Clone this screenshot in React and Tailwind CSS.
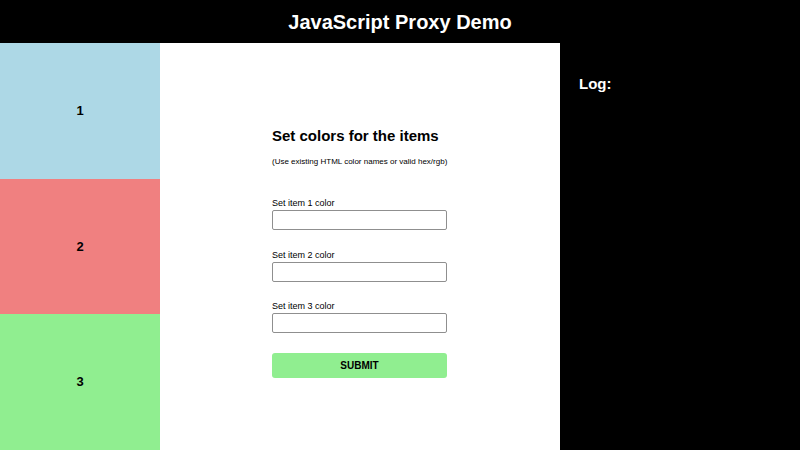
import React from "react";

const items = [
  { id: 1, color: "bg-[#add8e6]" },
  { id: 2, color: "bg-[#f08080]" },
  { id: 3, color: "bg-[#90ee90]" },
];

function ColorField({ n }) {
  return (
    <div className="flex flex-col">
      <label className="text-[9px] leading-[12px] text-black">Set item {n} color</label>
      <input
        type="text"
        className="mt-px h-[20px] w-full rounded-[2px] border border-[#8f8f8f] bg-white px-1 text-[10px]"
      />
    </div>
  );
}

export default function App() {
  return (
    <div
      className="flex h-[450px] w-[800px] flex-col overflow-hidden bg-white"
      style={{ fontFamily: '"Liberation Sans", Arial, sans-serif' }}
    >
      {/* Header */}
      <header className="flex h-[43px] shrink-0 items-center justify-center bg-black">
        <h1 className="text-[20px] font-bold leading-none text-white">JavaScript Proxy Demo</h1>
      </header>

      <div className="flex flex-1">
        {/* Items column */}
        <div className="flex w-[160px] flex-col">
          {items.map((it) => (
            <div key={it.id} className={`flex flex-1 items-center justify-center ${it.color}`}>
              <span className="text-[13px] font-bold text-black">{it.id}</span>
            </div>
          ))}
        </div>

        {/* Form */}
        <main className="flex w-[400px] bg-white pl-[112px] pt-[84px]">
          <form className="flex w-[175px] flex-col" onSubmit={(e) => e.preventDefault()}>
            <h2 className="whitespace-nowrap text-[15px] font-bold leading-[18px] text-black">
              Set colors for the items
            </h2>
            <p className="mt-[11px] whitespace-nowrap text-[8px] leading-[12px] text-black">
              (Use existing HTML color names or valid hex/rgb)
            </p>
            <div className="mt-[29px] flex flex-col gap-[18.5px]">
              <ColorField n={1} />
              <ColorField n={2} />
              <ColorField n={3} />
            </div>
            <button
              type="submit"
              className="mt-[20px] h-[25px] w-full rounded-[3px] bg-[#90ee90] text-[10px] font-bold text-black"
            >
              SUBMIT
            </button>
          </form>
        </main>

        {/* Log */}
        <aside className="flex-1 bg-black pl-[19px] pt-[31px]">
          <h3 className="text-[15px] font-bold leading-[19px] text-white">Log:</h3>
        </aside>
      </div>
    </div>
  );
}
